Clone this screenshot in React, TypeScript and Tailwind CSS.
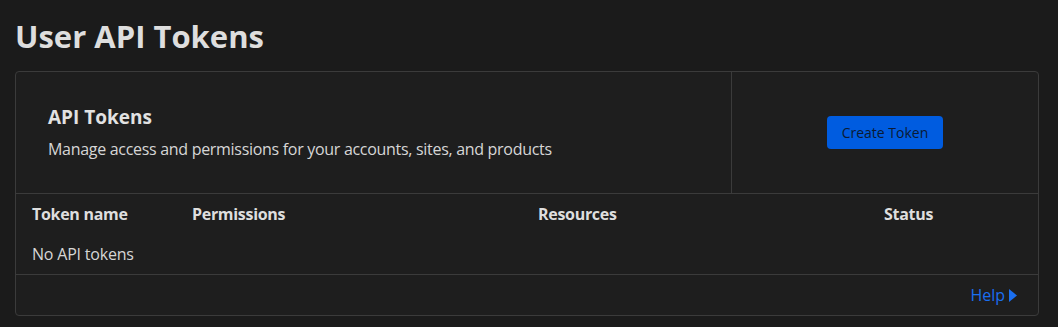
const columns = ["Token name", "Permissions", "Resources", "Status"];

export default function App() {
  return (
    <div className="min-h-screen bg-[#1b1b1b] px-[15px] pt-[16px] pb-4 font-['Open_Sans',sans-serif] text-[#dcdcdc]">
      <h1 className="text-[31px] font-bold leading-[40px] text-[#dedede]">User API Tokens</h1>

      <div className="mt-[15px] w-[1024px] rounded border border-[#3b3b3b] bg-[#1e1e1e]">
        <div className="flex h-[122px] border-b border-[#3b3b3b]">
          <div className="flex flex-1 flex-col justify-center px-8 pt-0">
            <h2 className="text-[19px] font-bold leading-6 text-[#e2e2e2]">API Tokens</h2>
            <p className="mt-[8px] text-[16px] leading-6 tracking-[-0.3px] text-[#d6d6d6]">
              Manage access and permissions for your accounts, sites, and products
            </p>
          </div>
          <div className="flex w-[307px] items-center justify-center border-l border-[#3b3b3b]">
            <button className="h-[33px] rounded-[4px] bg-[#005ce0] px-[15px] text-[14px] text-[#0b1a33]">
              Create Token
            </button>
          </div>
        </div>

        <div className="grid grid-cols-[160px_346px_346px_1fr] px-4">
          {columns.map((c) => (
            <div key={c} className="flex h-[41px] items-center pb-[1px] text-[16px] font-bold tracking-[-0.3px] text-[#dedede]">
              {c}
            </div>
          ))}
          <div className="col-span-4 flex h-[39px] items-center pb-[2px] text-[16px] tracking-[-0.2px] text-[#d6d6d6]">No API tokens</div>
        </div>

        <div className="flex h-[41px] items-center justify-end border-t border-[#3b3b3b] pr-[21px]">
          <a href="#" className="flex items-center gap-[4px] text-[16px] text-[#1a6ff0]">
            Help
            <svg width="8" height="13" viewBox="0 0 8 13" fill="currentColor">
              <path d="M0 0 L8 6.5 L0 13 Z" />
            </svg>
          </a>
        </div>
      </div>
    </div>
  );
}
